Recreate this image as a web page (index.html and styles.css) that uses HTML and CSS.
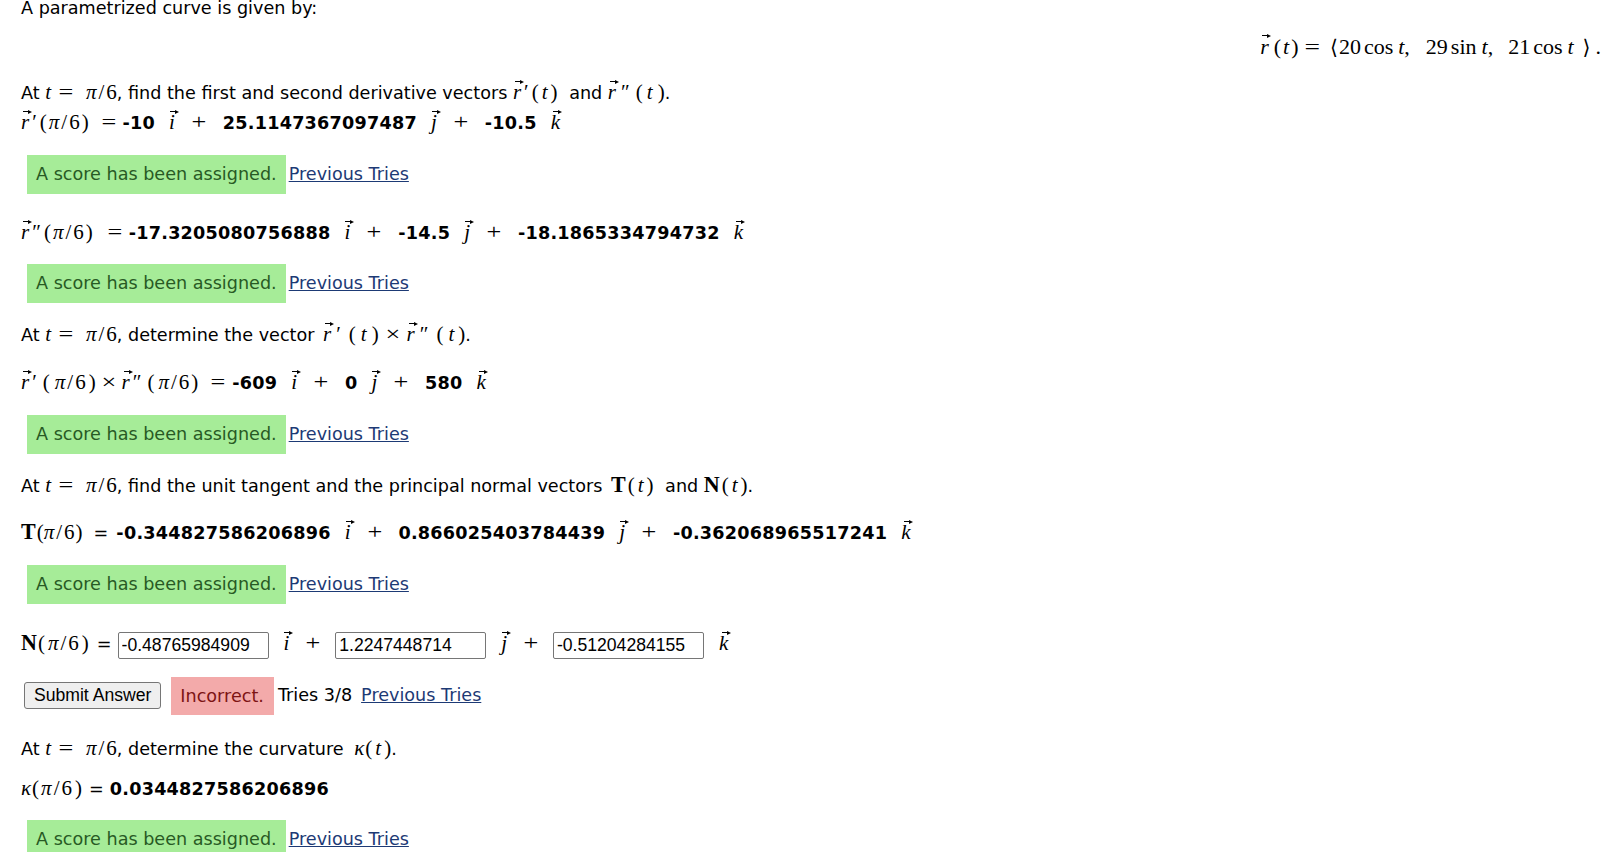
FILE: index.html
```html
<!DOCTYPE html>
<html lang="en">
<head>
<meta charset="utf-8">
<title>Parametrized curve</title>
<link rel="stylesheet" href="styles.css">
</head>
<body>
<div class="page">
  <div class="row r1">A parametrized curve is given by:</div>

  <div class="row r2 right"><span class="m big"><span class="v">r</span><span class="w5">(</span><i class="w2">t</i><span class="w2">)</span><span class="eq eqb">=</span><span class="ang">⟨</span><span class="w1">20</span><span class="w3">cos</span><i class="w5">t</i>,<span class="w16">29</span><span class="w3">sin</span><i class="w5">t</i>,<span class="w15">21</span><span class="w3">cos</span><i class="w5">t</i><span class="ang w9">⟩</span><span class="w5">.</span></span></div>

  <div class="row r3">At <span class="m"><i>t</i><span class="eq eqi">=</span><i>π</i><span class="sl">/</span>6</span>, find the first and second derivative vectors <span class="m"><span class="v">r</span><span class="pm">′</span><span class="w3">(</span><i class="w3">t</i><span class="w3">)</span></span><span class="w6"> and </span><span class="m"><span class="v">r</span><span class="pm2">″</span><span class="w6">(</span><i class="w4">t</i><span class="w5">)</span></span>.</div>

  <div class="row r4"><span class="m"><span class="v">r</span><span class="pm">′</span><span class="w3">(</span><i class="w2">π</i><span class="sl">/</span>6<span class="w2">)</span><span class="eq eqn">=</span></span><b class="num">-10</b><span class="m"><span class="v vi">i</span><span class="op">+</span></span><b class="num">25.1147367097487</b><span class="m"><span class="v vi">j</span><span class="op">+</span></span><b class="num">-10.5</b><span class="m"><span class="v vi">k</span></span></div>

  <div class="row box-row r5"><span class="ok">A score has been assigned.</span><a href="#" class="prev">Previous Tries</a></div>

  <div class="row r6"><span class="m"><span class="v">r</span><span class="pm">″</span><span class="w3">(</span><i class="w2">π</i><span class="sl">/</span>6<span class="w2">)</span><span class="eq eqn eqn6">=</span></span><b class="num">-17.3205080756888</b><span class="m"><span class="v vi">i</span><span class="op">+</span></span><b class="num">-14.5</b><span class="m"><span class="v vi">j</span><span class="op">+</span></span><b class="num">-18.1865334794732</b><span class="m"><span class="v vi">k</span></span></div>

  <div class="row box-row r7"><span class="ok">A score has been assigned.</span><a href="#" class="prev">Previous Tries</a></div>

  <div class="row r8">At <span class="m"><i>t</i><span class="eq eqi">=</span><i>π</i><span class="sl">/</span>6</span>, determine the vector <span class="m"><span class="v w3">r</span><span class="pm2">′</span><span class="w8">(</span><i class="w5">t</i><span class="w5">)</span><span class="x x8">×</span><span class="v">r</span><span class="pm2">″</span><span class="w8">(</span><i class="w5">t</i><span class="w4">)</span></span>.</div>

  <div class="row r9"><span class="m"><span class="v">r</span><span class="pm">′</span><span class="w6">(</span><i class="w5">π</i><span class="sl">/</span>6<span class="w3">)</span><span class="x x7">×</span><span class="v">r</span><span class="pm">″</span><span class="w6">(</span><i class="w4">π</i><span class="sl">/</span>6<span class="w2">)</span><span class="eq eqn">=</span></span><b class="num">-609</b><span class="m"><span class="v vi">i</span><span class="op">+</span></span><b class="num">0</b><span class="m"><span class="v vi">j</span><span class="op">+</span></span><b class="num">580</b><span class="m"><span class="v vi">k</span></span></div>

  <div class="row box-row r10"><span class="ok">A score has been assigned.</span><a href="#" class="prev">Previous Tries</a></div>

  <div class="row r11">At <span class="m"><i>t</i><span class="eq eqi">=</span><i>π</i><span class="sl">/</span>6</span>, find the unit tangent and the principal normal vectors <span class="m"><b class="bt w3">T</b><span class="w2">(</span><i class="w3">t</i><span class="w3">)</span></span><span class="w6"> and </span><span class="m"><b class="bt">N</b><span class="w2">(</span><i class="w3">t</i><span class="w3">)</span></span>.</div>

  <div class="row r12"><span class="m"><b class="bt">T</b><span class="w1">(</span><i>π</i><span class="sl">/</span>6<span class="w1">)</span></span><span class="seq">=</span><b class="num">-0.344827586206896</b><span class="m"><span class="v vi">i</span><span class="op">+</span></span><b class="num">0.866025403784439</b><span class="m"><span class="v vi">j</span><span class="op">+</span></span><b class="num">-0.362068965517241</b><span class="m"><span class="v vi">k</span></span></div>

  <div class="row box-row r13"><span class="ok">A score has been assigned.</span><a href="#" class="prev">Previous Tries</a></div>

  <div class="row r14"><span class="m"><b class="bt">N</b><span class="w1">(</span><i class="w3">π</i><span class="sl">/</span>6<span class="w3">)</span></span><span class="seq seqn">=</span><input class="ans" type="text" value="-0.48765984909"><span class="m"><span class="v vi vin">i</span><span class="op opn">+</span></span><input class="ans" type="text" value="1.2247448714"><span class="m"><span class="v vi vin">j</span><span class="op opn">+</span></span><input class="ans" type="text" value="-0.51204284155"><span class="m"><span class="v vi vin">k</span></span></div>

  <div class="row box-row r15"><button class="submit" type="button">Submit Answer</button><span class="bad">Incorrect.</span><span class="tries">Tries 3/8</span><a href="#" class="prev2">Previous Tries</a></div>

  <div class="row r16">At <span class="m"><i>t</i><span class="eq eqi">=</span><i>π</i><span class="sl">/</span>6</span>, determine the curvature <span class="m"><i class="w5">κ</i><span class="w1">(</span><i class="w3">t</i><span class="w3">)</span></span>.</div>

  <div class="row r17"><span class="m"><i>κ</i><span class="w1">(</span><i class="w2">π</i><span class="sl">/</span>6<span class="w3">)</span></span><span class="seq seqk">=</span><b class="num">0.0344827586206896</b></div>

  <div class="row box-row r18"><span class="ok">A score has been assigned.</span><a href="#" class="prev">Previous Tries</a></div>
</div>
</body>
</html>
```

FILE: styles.css
```css
html, body {
  margin: 0;
  padding: 0;
  background: #ffffff;
}

body {
  font-family: "DejaVu Sans", Verdana, sans-serif;
  font-size: 17.6px;
  color: #000000;
  overflow: hidden;
}

.page {
  display: flow-root;
  padding: 0 21px 0 21px;
}

.row {
  height: 24px;
  line-height: 24px;
  white-space: nowrap;
}

.right {
  text-align: right;
}

/* vertical rhythm */
.r1 { margin-top: -4px; }
.r2 { margin-top: 12px; height: 30px; line-height: 30px; }
.r3 { margin-top: 18px; }
.r4 { margin-top: 6px; }
.r5 { margin-top: 21px; }
.r6 { margin-top: 26px; }
.r7 { margin-top: 20px; }
.r8 { margin-top: 19px; }
.r9 { margin-top: 24px; }
.r10 { margin-top: 21px; }
.r11 { margin-top: 19px; }
.r12 { margin-top: 23px; }
.r13 { margin-top: 21px; }
.r14 { margin-top: 25px; height: 27px; line-height: 27px; }
.r15 { margin-top: 20px; }
.r16 { margin-top: 21px; }
.r17 { margin-top: 16px; }
.r18 { margin-top: 20px; }

.box-row {
  height: 39px;
  line-height: 39px;
  display: flex;
  align-items: center;
  padding-left: 6px;
}

/* math */
.m {
  font-family: "Liberation Serif", "Times New Roman", serif;
  font-size: 21px;
}

.m i {
  font-style: italic;
}

.m b {
  font-weight: bold;
}

.big {
  font-size: 22px;
}

.bt {
  font-size: 1.05em;
}

/* spacing helpers */
.w1 { margin-left: 1px; }
.w2 { margin-left: 2px; }
.w3 { margin-left: 3px; }
.w4 { margin-left: 4px; }
.w5 { margin-left: 5px; }
.w6 { margin-left: 6px; }
.w8 { margin-left: 8px; }
.w9 { margin-left: 9px; }
.w15 { margin-left: 15px; }
.w16 { margin-left: 16px; }

.pm {
  margin-left: 3px;
}

.pm2 {
  margin-left: 5px;
}

.sl {
  margin: 0 2px 0 2px;
}

/* TeX-like wide relation / binary symbols */
.eq,
.op,
.x {
  display: inline-block;
  transform: scaleX(1.25);
}

.eqb {
  margin: 0 12px 0 7px;
}

.eqi {
  margin: 0 14px 0 9px;
}

.eqn {
  margin: 0 8px 0 14px;
}

.eqn6 {
  margin-left: 16px;
}

.x {
  margin: 0 5px 0 5px;
}

.x7 {
  margin: 0 7px 0 7px;
}

.x8 {
  margin: 0 8px 0 8px;
}

.op {
  margin: 0 18px 0 18px;
}

.opn {
  margin: 0 16px 0 18px;
}

.seq {
  margin: 0 8px 0 11px;
}

.seqn {
  margin: 0 6px 0 8px;
}

.seqk {
  margin: 0 6px 0 7px;
}

.ang {
  font-family: "DejaVu Serif", "DejaVu Sans", serif;
  font-size: 0.92em;
}

.v {
  position: relative;
  display: inline-block;
  font-style: italic;
  line-height: 1;
}

.vi {
  margin-left: 14px;
}

.vin {
  margin-left: 15px;
}

.v::before {
  content: "";
  position: absolute;
  left: calc(50% - 2px);
  top: -1px;
  width: 6px;
  height: 1.3px;
  background: #000000;
}

.v::after {
  content: "";
  position: absolute;
  left: calc(50% + 3px);
  top: -2.5px;
  width: 0;
  height: 0;
  border-left: 4px solid #000000;
  border-top: 2px solid transparent;
  border-bottom: 2px solid transparent;
}

.num {
  font-weight: bold;
  letter-spacing: 0.25px;
}

/* answer feedback */
.ok {
  display: inline-block;
  height: 39px;
  line-height: 39px;
  padding: 0 9px;
  background: #a6ec98;
  color: #285a24;
}

.prev {
  margin-left: 3px;
  color: #1d3a75;
  text-decoration: underline;
}

.ans {
  box-sizing: border-box;
  width: 151px;
  height: 27px;
  padding: 1px 3px;
  border: 1px solid #767676;
  border-radius: 2px;
  font-family: "Liberation Sans", Arial, sans-serif;
  font-size: 17.6px;
  color: #000000;
  background: #ffffff;
  vertical-align: middle;
}

.submit {
  box-sizing: border-box;
  height: 27px;
  padding: 0 9px;
  margin-left: -3px;
  border: 1px solid #767676;
  border-radius: 3px;
  background: #efefef;
  font-family: "Liberation Sans", Arial, sans-serif;
  font-size: 17.6px;
  color: #000000;
}

.bad {
  display: inline-block;
  height: 38px;
  line-height: 38px;
  margin-left: 10px;
  padding: 0 10px 0 9px;
  background: #f3aaaa;
  color: #7d1414;
}

.tries {
  margin-left: 4px;
}

.prev2 {
  margin-left: 9px;
  color: #1d3a75;
  text-decoration: underline;
}
```
